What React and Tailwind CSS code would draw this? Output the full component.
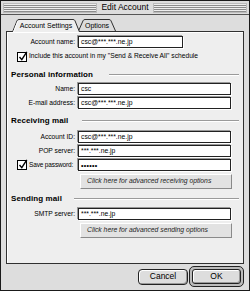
import React from "react";

const F = { fontFamily: '"Liberation Sans", Arial, sans-serif' };

function Tab({ w, label, active, z }) {
  const h = active ? 13 : 12;
  const d = `M0.5,${h} L5,1.8 Q5.5,0.5 7,0.5 L${w - 7},0.5 Q${w - 5.5},0.5 ${w - 5},1.8 L${w - 0.5},${h}`;
  return (
    <div className={`relative flex items-center justify-center ${active ? "h-[13px] -mb-[1px]" : "h-[12px]"} ${z}`} style={{ width: w }}>
      <svg className="absolute inset-0" width={w} height={h} viewBox={`0 0 ${w} ${h}`}>
        <path d={d} fill={active ? "#eeeeee" : "#dcdcdc"} stroke="#303030" strokeWidth="1" />
        {active && <path d={`M1.5,${h} L5.8,2.2`} stroke="#ffffff" strokeWidth="1" fill="none" />}
      </svg>
      <span className={`relative text-[7px] leading-none text-black whitespace-nowrap ${active ? "pb-[1px]" : ""}`}>{label}</span>
    </div>
  );
}

function Input({ value, w = "w-[153px]" }) {
  return (
    <div className={`${w} h-[12px] bg-white border border-[#222] shadow-[-1px_-1px_0_#999,1px_1px_0_#fff] flex items-center pl-[2px] text-[6.8px] leading-none text-black whitespace-nowrap`}>
      {value}
    </div>
  );
}

function Check() {
  return (
    <div className="w-[10px] h-[10px] bg-white border border-black relative shrink-0">
      <svg className="absolute -top-[2px] left-0" width="10" height="11" viewBox="0 0 10 11">
        <path d="M1.5,6 L3.8,8.6 L8.8,0.8" stroke="#000" strokeWidth="1.4" fill="none" />
      </svg>
    </div>
  );
}

function Row({ label, children, mt }) {
  return (
    <div className={`flex items-center h-[12px] ${mt}`}>
      <div className="w-[69px] text-right text-[6.7px] leading-none text-black pr-[2px] whitespace-nowrap">{label}</div>
      <div className="ml-[1px]">{children}</div>
    </div>
  );
}

function Heading({ text, mt, gap }) {
  return (
    <div className={`flex items-center h-[10px] pl-[3px] pr-[4px] ${mt}`}>
      <span className="text-[8px] font-bold leading-none text-black tracking-[0.1px] whitespace-nowrap">{text}</span>
      <div className={`flex-1 h-[1px] bg-[#9a9a9a] border-b border-white box-content ${gap}`} />
    </div>
  );
}

function LinkBtn({ text, mt }) {
  return (
    <div className={`flex ${mt}`}>
      <div className="ml-[72px] w-[152px] h-[15px] bg-[#e2e2e2] border-t border-l border-white border-b border-r border-b-[#8a8a8a] border-r-[#8a8a8a] flex items-center pl-[6px] text-[6.8px] italic leading-none text-[#222] whitespace-nowrap">
        {text}
      </div>
    </div>
  );
}

export default function App() {
  const stripes =
    "bg-[repeating-linear-gradient(to_bottom,#eeeeee_0px,#eeeeee_1px,#8c8c8c_1px,#8c8c8c_2px)]";
  return (
    <div className="w-[250px] h-[291px] bg-[#dddddd] border border-[#1a1a1a] flex flex-col overflow-hidden" style={F}>
      {/* Title bar */}
      <div className="h-[14px] shrink-0 flex items-center px-[2px] border-b border-[#555] bg-[#dddddd]">
        <div className={`flex-1 h-[10px] ${stripes} border border-[#bbbbbb]`} />
        <div className="px-[4px] text-[8.5px] leading-none text-black">Edit Account</div>
        <div className={`flex-1 h-[10px] ${stripes} border border-[#bbbbbb]`} />
      </div>

      {/* Content */}
      <div className="flex flex-col px-[5px] pt-[4px]">
        <div className="flex ml-[6px] items-end h-[12px]">
          <Tab w={68} label="Account Settings" active z="z-20" />
          <div className="-ml-[2px]">
            <Tab w={38} label="Options" z="z-10" />
          </div>
        </div>
        <div className="h-[233px] bg-[#eeeeee] border border-[#303030] shadow-[inset_1px_1px_0_#ffffff] flex flex-col pt-[4px] pl-[1px]">
          <Row label="Account name:" mt="">
            <Input value="csc@***.***.ne.jp" w="w-[105px]" />
          </Row>
          <div className="flex items-center h-[11px] mt-[3px] pl-[9px]">
            <Check />
            <span className="ml-[2px] text-[6.7px] leading-none text-black whitespace-nowrap">
              Include this account in my "Send &amp; Receive All" schedule
            </span>
          </div>

          <Heading text="Personal information" mt="mt-[8px]" gap="ml-[16px]" />
          <Row label="Name:" mt="mt-[3px]">
            <Input value="csc" />
          </Row>
          <Row label="E-mail address:" mt="mt-[2px]">
            <Input value="csc@***.***.ne.jp" />
          </Row>

          <Heading text="Receiving mail" mt="mt-[7px]" gap="ml-[14px]" />
          <Row label="Account ID:" mt="mt-[5px]">
            <Input value="csc@***.***.ne.jp" />
          </Row>
          <Row label="POP server:" mt="mt-[2px]">
            <Input value="***.***.ne.jp" />
          </Row>
          <div className="flex items-center h-[12px] mt-[2px]">
            <div className="w-[69px] shrink-0 flex items-center pl-[9px]">
              <Check />
              <span className="ml-[2px] text-[6.5px] tracking-[-0.15px] leading-none text-black whitespace-nowrap">Save password:</span>
            </div>
            <div className="ml-[1px]">
              <Input value={<span className="text-[7px] tracking-[0.3px] font-bold">••••••</span>} />
            </div>
          </div>
          <LinkBtn text="Click here for advanced receiving options" mt="mt-[3px]" />

          <Heading text="Sending mail" mt="mt-[5px]" gap="ml-[12px]" />
          <Row label="SMTP server:" mt="mt-[4px]">
            <Input value="***.***.ne.jp" />
          </Row>
          <LinkBtn text="Click here for advanced sending options" mt="mt-[3px]" />
        </div>

        {/* Buttons */}
        <div className="flex justify-end items-center mt-[2px] gap-[1px]">
          <div className="w-[50px] h-[16px] rounded-[4px] border border-[#222] bg-[#dddddd] shadow-[inset_1px_1px_0_#ffffff,inset_-1px_-1px_0_#999999] flex items-center justify-center text-[8.5px] leading-none text-black">
            Cancel
          </div>
          <div className="w-[55px] h-[21px] rounded-[5px] border border-[#222] bg-[#bbbbbb] p-[2px] flex">
            <div className="flex-1 rounded-[3px] border border-[#222] bg-[#dddddd] shadow-[inset_1px_1px_0_#ffffff,inset_-1px_-1px_0_#999999] flex items-center justify-center text-[8.5px] leading-none text-black">
              OK
            </div>
          </div>
        </div>
      </div>
    </div>
  );
}
